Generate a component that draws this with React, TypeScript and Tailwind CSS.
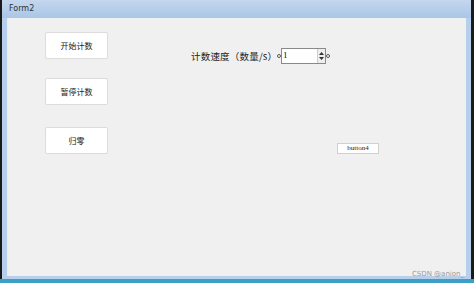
import React from 'react'

const cjk = '"Noto Sans CJK SC", "Noto Sans", sans-serif'

function Btn({ label, top }: { label: string; top: number }) {
  return (
    <div
      className="absolute left-[37px] w-[63px] h-[27px] bg-white border border-[#dcdcdc] rounded-[2px] flex items-center justify-center text-[8px] text-[#222]"
      style={{ top }}
    >
      {label}
    </div>
  )
}

export default function App() {
  return (
    <div className="w-[474px] h-[283px] bg-[#1a1a1a] flex flex-col" style={{ fontFamily: cjk }}>
      <div className="flex-1 flex flex-col ml-[2px] mr-[3px] bg-[#b6cfea]">
        {/* title bar */}
        <div className="h-[18px] flex items-center pl-[7px] bg-gradient-to-b from-[#c3d7ee] to-[#aac6e6] text-[8px] text-[#333]" style={{ fontFamily: '"DejaVu Sans", sans-serif' }}>
          Form2
        </div>
        <div className="flex-1 flex px-[5px] pb-[3px]">
          <div className="flex-1 relative bg-[#f0f0f0] border-l border-[#e6eef8]">
            <Btn label="开始计数" top={14} />
            <Btn label="暂停计数" top={60} />
            <Btn label="归零" top={109} />

            <div className="absolute left-[183px] top-[31px] text-[9.5px] text-[#222] tracking-[0.2px]">
              计数速度（数量/s）
            </div>

            {/* numeric up/down with design handles */}
            <div className="absolute left-[269px] top-[30px] flex items-center">
              <div className="w-[4px] h-[4px] rounded-full border border-[#555] bg-white" />
              <div className="w-[45px] h-[16px] border border-[#8a8a8a] bg-white flex items-center">
                <span className="flex-1 pl-[1px] text-[9px] text-[#111]" style={{ fontFamily: '"Liberation Serif", serif' }}>1</span>
                <div className="w-[8px] h-full flex flex-col items-center justify-center gap-[2px] bg-[#eee] border-l border-[#ccc]">
                  <svg width="5" height="3" viewBox="0 0 5 3"><path d="M0 3 L2.5 0 L5 3 Z" fill="#333" /></svg>
                  <svg width="5" height="3" viewBox="0 0 5 3"><path d="M0 0 L2.5 3 L5 0 Z" fill="#333" /></svg>
                </div>
              </div>
              <div className="w-[4px] h-[4px] rounded-full border border-[#555] bg-white" />
            </div>

            <div
              className="absolute left-[329px] top-[125px] w-[42px] h-[11px] bg-white border border-[#d0d0d0] flex items-center justify-center text-[7px] text-[#222]"
              style={{ fontFamily: '"Liberation Serif", serif' }}
            >
              button4
            </div>

            <div className="absolute right-[2px] bottom-[-3px] text-[7px] text-[#9a9a9a]" style={{ fontFamily: '"DejaVu Sans", sans-serif' }}>
              CSDN @anion_
            </div>
          </div>
        </div>
      </div>
      <div className="h-[4px] bg-[#3c9fc6]" />
    </div>
  )
}
